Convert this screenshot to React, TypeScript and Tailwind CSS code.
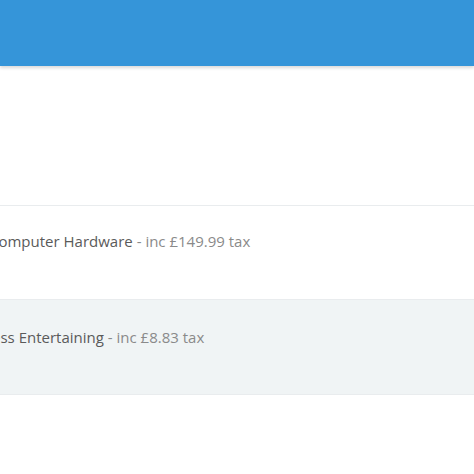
export default function App() {
  return (
    <div className="w-[474px] h-[474px] overflow-hidden bg-white" style={{ fontFamily: '"Open Sans", Lato, sans-serif' }}>
      <div className="h-[66px] bg-[#3595d9] shadow-[0_2px_3px_rgba(0,0,0,0.15)] relative z-10" />
      <div className="h-[139px]" />
      <div className="border-t border-[#e9ecee]">
        <div className="h-[93px] pt-[25px] overflow-hidden">
          <p className="ml-[-11px] whitespace-nowrap text-[15px] leading-5 text-[#5a5a5a]">
            Computer Hardware <span className="text-[#8a8a8a]">- inc £149.99 tax</span>
          </p>
        </div>
        <div className="h-[96px] pt-[27px] overflow-hidden bg-[#f0f4f5] border-t border-[#e9ecee] border-b">
          <p className="ml-[-47px] whitespace-nowrap text-[15px] leading-5 text-[#5a5a5a]">
            Business Entertaining <span className="text-[#8a8a8a]">- inc £8.83 tax</span>
          </p>
        </div>
      </div>
    </div>
  );
}
